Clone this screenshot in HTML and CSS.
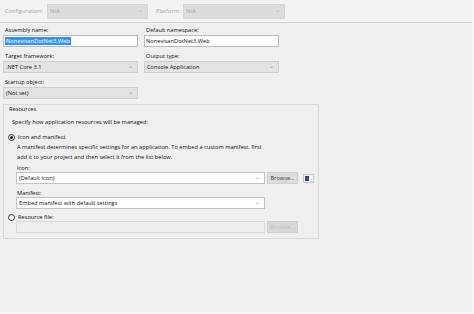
FILE: index.html
```html
<!DOCTYPE html>
<html>
<head>
<meta charset="utf-8">
<link rel="stylesheet" href="styles.css">
</head>
<body>
<div class="page">
  <div class="toolbar">
    <span class="tb-label">Configuration:</span>
    <div class="combo disabled cfg"><span>N/A</span><span class="arrow">&#8964;</span></div>
    <span class="tb-label plat">Platform:</span>
    <div class="combo disabled plat-combo"><span>N/A</span><span class="arrow">&#8964;</span></div>
  </div>
  <div class="main">
    <div class="grid">
      <div class="field">
        <div class="label">Assembly name:</div>
        <div class="textbox"><span class="sel">NonevisanDotNet3.Web</span></div>
      </div>
      <div class="field">
        <div class="label">Default namespace:</div>
        <div class="textbox">NonevisanDotNet3.Web</div>
      </div>
      <div class="field">
        <div class="label">Target framework:</div>
        <div class="combo"><span>.NET Core 3.1</span><span class="arrow">&#8964;</span></div>
      </div>
      <div class="field">
        <div class="label">Output type:</div>
        <div class="combo"><span>Console Application</span><span class="arrow">&#8964;</span></div>
      </div>
      <div class="field">
        <div class="label">Startup object:</div>
        <div class="combo"><span>(Not set)</span><span class="arrow">&#8964;</span></div>
      </div>
    </div>

    <div class="group">
      <div class="group-title">Resources</div>
      <div class="hint">Specify how application resources will be managed:</div>
      <div class="radio-row"><span class="radio checked"></span><span>Icon and manifest</span></div>
      <div class="indent">
        <div class="desc">A manifest determines specific settings for an application. To embed a custom manifest, first<br>add it to your project and then select it from the list below.</div>
        <div class="label sub">Icon:</div>
        <div class="row">
          <div class="combo white wide"><span>(Default Icon)</span><span class="arrow">&#8964;</span></div>
          <div class="btn">Browse...</div>
          <div class="preview"><span class="pv-dark"></span></div>
        </div>
        <div class="label sub manifest">Manifest:</div>
        <div class="row">
          <div class="combo white wide"><span>Embed manifest with default settings</span><span class="arrow">&#8964;</span></div>
        </div>
      </div>
      <div class="radio-row rf"><span class="radio"></span><span>Resource file:</span></div>
      <div class="indent">
        <div class="row">
          <div class="textbox disabled-box wide"></div>
          <div class="btn disabled-btn">Browse...</div>
        </div>
      </div>
    </div>
  </div>
</div>
</body>
</html>
```

FILE: styles.css
```css
* { box-sizing: border-box; }
html, body { margin: 0; padding: 0; }
body {
  background: #efefef;
  font-family: "Open Sans", "Noto Sans", sans-serif;
  font-size: 5.7px;
  color: #111;
  width: 474px;
  height: 314px;
  overflow: hidden;
}
.page {
  width: 474px;
  height: 314px;
  border-right: 2px solid #f7f7f7;
  border-bottom: 2px solid #f7f7f7;
}
.toolbar {
  height: 23px;
  background: #f2f2f2;
  border-bottom: 1px solid #d6d6d6;
  display: flex;
  align-items: center;
  padding-left: 5px;
}
.tb-label { color: #a8a8a8; width: 42px; }
.tb-label.plat { width: 27px; margin-left: 8px; }
.combo {
  height: 12px;
  display: flex;
  align-items: center;
  justify-content: space-between;
  background: #e3e3e3;
  border: 1px solid #d0d0d0;
  padding: 0 4px 0 2px;
  line-height: 10px;
}
.combo .arrow { color: #9a9a9a; font-size: 6px; line-height: 6px; margin-top: -3px; }
.combo.disabled {
  height: 15px;
  background: #dcdcdc;
  border-color: #d6d6d6;
  color: #a6a6a6;
}
.combo.disabled .arrow { color: #b8b8b8; }
.cfg { width: 101px; }
.plat-combo { width: 102px; }
.main { padding: 0 3px; }
.grid {
  display: grid;
  grid-template-columns: 135px 135px;
  column-gap: 6px;
  row-gap: 4px;
  padding-top: 2px;
  width: 282px;
}
.label { line-height: 10px; padding-left: 2px; }
.textbox {
  height: 12px;
  background: #fff;
  border: 1px solid #bdbdbd;
  line-height: 10px;
  padding-left: 1px;
  white-space: nowrap;
}
.sel { background: #3390ff; color: #fff; padding: 0 1px; }
.group {
  margin-top: 5px;
  width: 316px;
  height: 135px;
  border: 1px solid #dadada;
  padding-left: 4px;
}
.group-title { line-height: 9px; padding-left: 1px; }
.hint { line-height: 9px; margin-top: 4px; padding-left: 4px; }
.radio-row {
  display: flex;
  align-items: center;
  gap: 3px;
  line-height: 9px;
  margin-top: 6px;
}
.radio {
  width: 7px;
  height: 7px;
  border-radius: 50%;
  border: 1px solid #3a3a3a;
  background: #fff;
  display: inline-flex;
  align-items: center;
  justify-content: center;
}
.radio.checked::after {
  content: "";
  width: 3px;
  height: 3px;
  border-radius: 50%;
  background: #1e1e1e;
}
.indent { padding-left: 8px; }
.desc { line-height: 9.5px; margin-top: 1px; padding-left: 1px; }
.label.sub { padding-left: 1px; margin-top: 2px; line-height: 8px; }
.label.sub.manifest { margin-top: 5px; }
.row { display: flex; align-items: center; gap: 2px; }
.combo.white { background: #fff; border-color: #c4c4c4; }
.wide { width: 249px; }
.btn {
  width: 31px;
  height: 12px;
  background: #dcdcdc;
  border: 1px solid #cfcfcf;
  line-height: 10px;
  text-align: center;
  color: #3a3a3a;
}
.preview {
  width: 11px;
  height: 9px;
  margin-left: 3px;
  background: #f4f4f4;
  border: 1px solid #c8c8c8;
  display: flex;
  padding: 1px;
}
.pv-dark { width: 4px; background: #2a4a85; }
.rf { margin-top: 4px; }
.disabled-box { background: #eeeeee; border-color: #dadada; height: 12px; margin-top: -1px; }
.disabled-btn { background: #d7d7d7; border-color: #d0d0d0; color: #bdbdbd; margin-top: -1px; }
```
